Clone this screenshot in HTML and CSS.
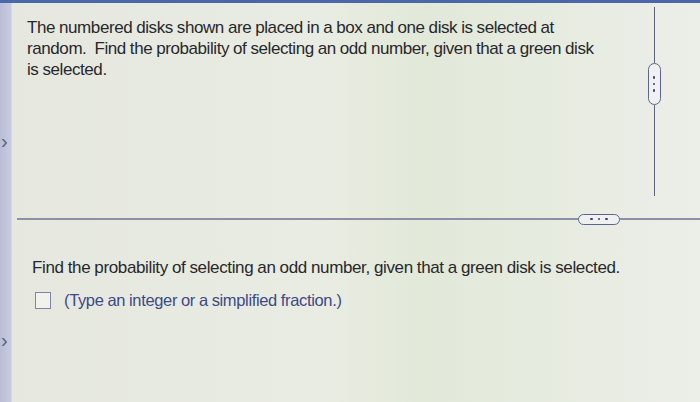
FILE: index.html
```html
<!DOCTYPE html>
<html>
<head>
<meta charset="utf-8">
<link rel="stylesheet" href="styles.css">
</head>
<body>
<div class="screen">
  <div class="topbar"></div>
  <div class="main">
    <aside class="rail">
      <span class="chev chev-1">&#8250;</span>
      <span class="chev chev-2">&#8250;</span>
    </aside>
    <div class="content">
      <section class="question">
        <p class="qtext">The numbered disks shown are placed in a box and one disk is selected at random.&nbsp; Find the probability of selecting an odd number, given that a green disk is selected.</p>
        <div class="vsplit">
          <div class="vline"></div>
          <div class="vhandle"><i></i><i></i><i></i></div>
          <div class="vline"></div>
        </div>
      </section>
      <div class="hsplit">
        <div class="hline"></div>
        <div class="hhandle"><i></i><i></i><i></i></div>
        <div class="hline short"></div>
      </div>
      <section class="answer">
        <p class="prompt">Find the probability of selecting an odd number, given that a green disk is selected.</p>
        <div class="entry">
          <span class="box"></span>
          <span class="hint">(Type an integer or a simplified fraction.)</span>
        </div>
      </section>
    </div>
  </div>
</div>
</body>
</html>
```
FILE: styles.css
```css
html, body {
  margin: 0;
  padding: 0;
}
body {
  width: 700px;
  height: 402px;
  overflow: hidden;
  font-family: "Liberation Sans", Arial, sans-serif;
  background: #e7e9e1;
}
.screen {
  display: flex;
  flex-direction: column;
  width: 700px;
  height: 402px;
}
.topbar {
  height: 3px;
  background: #4a68a8;
  flex: none;
}
.main {
  flex: 1;
  display: flex;
}
.rail {
  width: 11px;
  flex: none;
  background: linear-gradient(to right, #b9bdd6, #c9cce0);
  position: relative;
  border-right: 1px solid #d6d8e0;
}
.chev {
  position: absolute;
  left: 1px;
  font-size: 20px;
  color: #5a6080;
  line-height: 1;
}
.chev-1 { top: 128px; }
.chev-2 { top: 327px; }
.content {
  flex: 1;
  display: flex;
  flex-direction: column;
  background: linear-gradient(to right, #e6e8df 0%, #e9ece2 45%, #e2e9d9 60%, #eceee8 100%);
}
.question {
  display: flex;
  height: 209px;
}
.qtext {
  margin: 14px 0 0 15px;
  width: 572px;
  font-size: 17px;
  line-height: 21px;
  color: #27282c;
  letter-spacing: -0.42px;
  word-spacing: -0.3px;
}
.vsplit {
  margin-left: 47px;
  margin-top: 4px;
  display: flex;
  flex-direction: column;
  align-items: center;
  width: 16px;
  height: 189px;
}
.vline {
  width: 1px;
  background: #5d6378;
}
.vline:first-child { height: 56px; }
.vline:last-child { flex: 1; }
.vhandle {
  width: 11px;
  height: 40px;
  border: 1.5px solid #5d6688;
  border-radius: 7px;
  background: #eef0f2;
  display: flex;
  flex-direction: column;
  align-items: center;
  justify-content: center;
  gap: 4px;
  flex: none;
}
.vhandle i, .hhandle i {
  width: 2.5px;
  height: 2.5px;
  border-radius: 50%;
  background: #3f4660;
  display: block;
}
.hsplit {
  display: flex;
  align-items: center;
  padding-left: 5px;
  height: 14px;
}
.hline {
  flex: 1;
  height: 1.5px;
  background: #8a90a8;
}
.hline.short {
  flex: none;
  width: 80px;
}
.hhandle {
  width: 40px;
  height: 9px;
  border: 1.5px solid #5d6688;
  border-radius: 6px;
  background: #eef0f2;
  display: flex;
  align-items: center;
  justify-content: center;
  gap: 5px;
}
.answer {
  padding: 32px 0 0 20px;
}
.prompt {
  margin: 0;
  font-size: 17px;
  line-height: 20px;
  color: #27282c;
  letter-spacing: -0.36px;
  word-spacing: -0.3px;
}
.entry {
  display: flex;
  align-items: center;
  margin-top: 13px;
  margin-left: 3px;
  gap: 13px;
}
.box {
  width: 14px;
  height: 15px;
  border: 1.5px solid #7d86a6;
  background: #f1f2ee;
  display: block;
}
.hint {
  font-size: 16.5px;
  color: #3c4a86;
  letter-spacing: -0.35px;
  word-spacing: -0.3px;
}
```
